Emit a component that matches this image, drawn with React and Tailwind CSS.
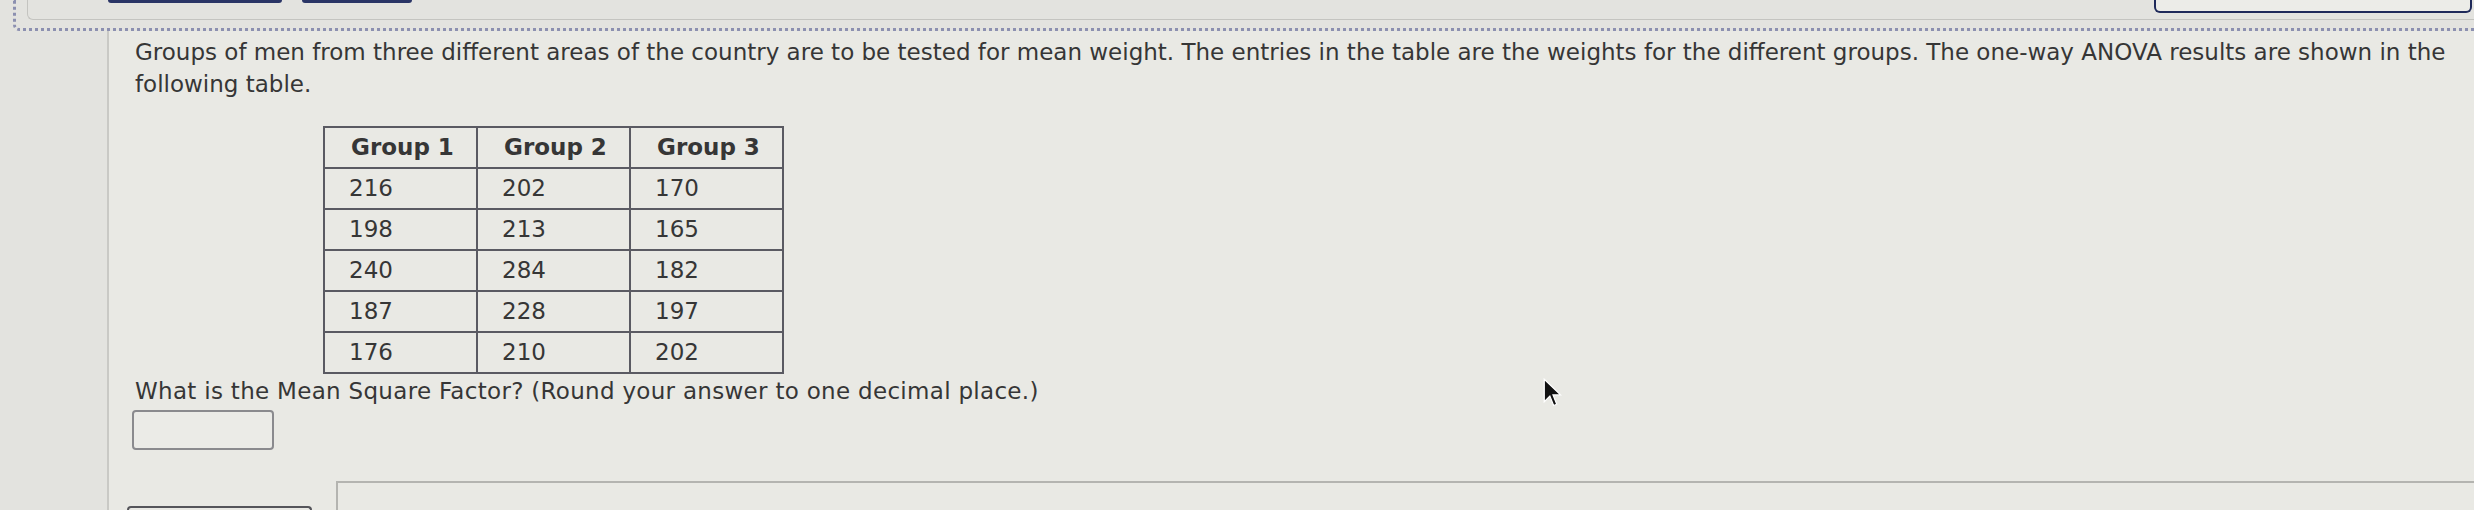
const rows = [
  ['216', '202', '170'],
  ['198', '213', '165'],
  ['240', '284', '182'],
  ['187', '228', '197'],
  ['176', '210', '202'],
]

function Cursor() {
  return (
    <svg width="20" height="30" viewBox="0 0 16 24" className="absolute left-[1543px] top-[378px]">
      <path d="M1 1 L1 19 L5.5 14.5 L8.5 22 L11 21 L8 13.5 L14 13.5 Z" fill="#111" stroke="#fff" strokeWidth="1" />
    </svg>
  )
}

export default function App() {
  return (
    <div className="relative w-[2474px] h-[510px] overflow-hidden bg-[#e9e9e4] text-[#363636] font-['DejaVu_Sans','Verdana',sans-serif]">
      {/* top toolbar strip */}
      <div className="bg-[#e3e3df]">
        <div className="ml-[13px] h-[31px] border-l-[3px] border-b-[3px] border-dotted border-[#8c90b0] rounded-bl-md pl-[11px]">
          <div className="h-[20px] border-l border-b border-[#c4c4c0] rounded-bl-md flex items-start">
            <div className="ml-[80px] w-[174px] h-[3px] bg-[#2a3566] rounded-b" />
            <div className="ml-[20px] w-[110px] h-[3px] bg-[#2a3566] rounded-b" />
            <div className="ml-auto mr-[2px] w-[318px] h-[13px] border-2 border-t-0 border-[#1f2a5a] rounded-b-md bg-[#ecece8]" />
          </div>
        </div>
      </div>

      <div className="flex h-[480px]">
        <div className="w-[107px] shrink-0 bg-[#e3e3df]" />
        <div className="flex-1 border-l-2 border-[#c9c9c5] pl-[26px] pr-[20px] pt-[5px]">
          <p className="text-[23px] leading-[32px]">
            Groups of men from three different areas of the country are to be tested for mean weight. The entries in the table are the weights for the different groups. The one-way ANOVA results are shown in the following table.
          </p>

          <table className="ml-[188px] mt-[26px] border-collapse text-[23px]">
            <thead>
              <tr className="h-[41px]">
                {['Group 1', 'Group 2', 'Group 3'].map((h) => (
                  <th key={h} className="w-[153px] border-2 border-[#5a5a62] pl-[26px] text-left font-bold">
                    {h}
                  </th>
                ))}
              </tr>
            </thead>
            <tbody>
              {rows.map((r, i) => (
                <tr key={i} className="h-[41px]">
                  {r.map((v, j) => (
                    <td key={j} className="border-2 border-[#5a5a62] pl-[24px]">
                      {v}
                    </td>
                  ))}
                </tr>
              ))}
            </tbody>
          </table>

          <p className="text-[23px] leading-[32px] mt-[1px] tracking-[0.3px]">
            What is the Mean Square Factor? (Round your answer to one decimal place.)
          </p>
          <div className="ml-[-3px] mt-[3px] w-[142px] h-[40px] border-2 border-[#8a8a8e] rounded bg-[#ebebe7]" />

          <div className="flex items-start mt-[31px] mr-[-20px]">
            <div className="ml-[-8px] mt-[25px] w-[185px] h-[20px] border-t-2 border-x-2 border-[#55555a] rounded-t" />
            <div className="ml-[24px] flex-1 h-[40px] border-t-2 border-l-2 border-[#b4b4b0]" />
          </div>
        </div>
      </div>

      <Cursor />
    </div>
  )
}
